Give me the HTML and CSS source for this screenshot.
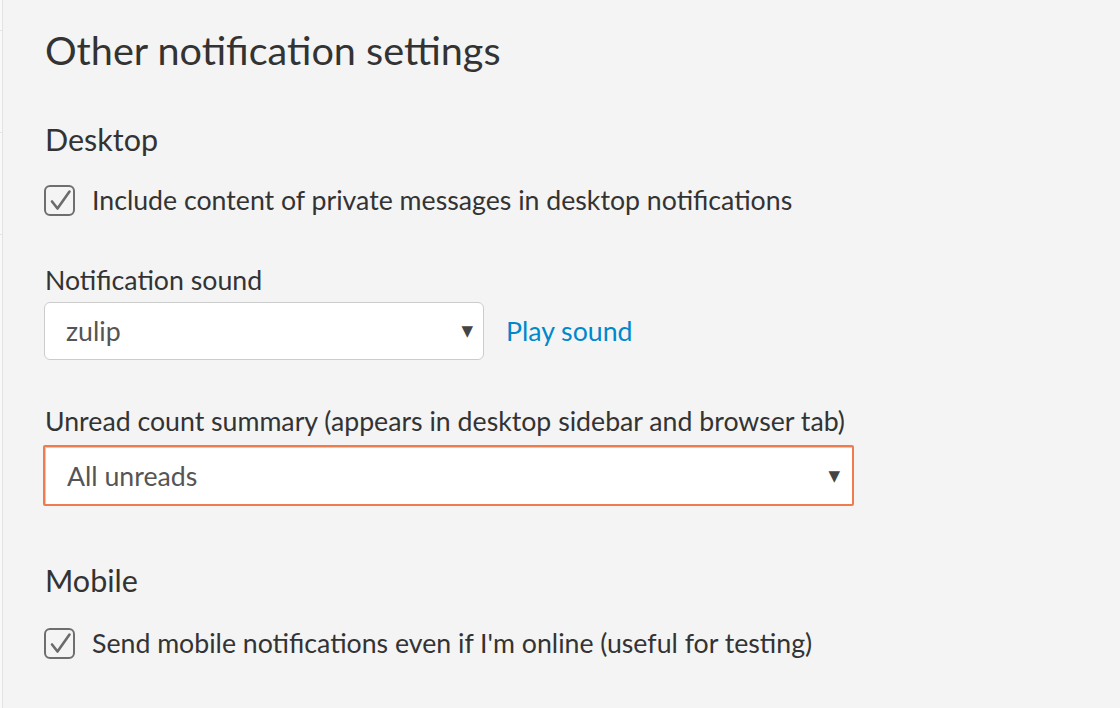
FILE: index.html
```html
<!DOCTYPE html>
<html>
<head>
<meta charset="utf-8">
<link rel="stylesheet" href="styles.css">
</head>
<body>
<div class="page">
  <div class="side-strip">
    <div class="strip-cell"></div>
    <div class="strip-cell"></div>
    <div class="strip-cell"></div>
    <div class="strip-cell"></div>
  </div>
  <main class="content">
    <h1 class="title">Other notification settings</h1>

    <h2 class="section desktop">Desktop</h2>
    <label class="check-row">
      <span class="checkbox"><svg viewBox="0 0 27 27" width="27" height="27"><path d="M6 14.5 L11.5 21.5 L23.5 4.5" fill="none" stroke="#6b6b6b" stroke-width="2.6" stroke-linecap="round" stroke-linejoin="round"/></svg></span>
      <span class="check-text">Include content of private messages in desktop notifications</span>
    </label>

    <div class="field sound-field">
      <div class="field-label">Notification sound</div>
      <div class="select-row">
        <div class="select sound-select"><span>zulip</span><span class="arrow">▼</span></div>
        <a class="link">Play sound</a>
      </div>
    </div>

    <div class="field unread-field">
      <div class="field-label">Unread count summary (appears in desktop sidebar and browser tab)</div>
      <div class="select unread-select focused"><span>All unreads</span><span class="arrow">▼</span></div>
    </div>

    <h2 class="section mobile">Mobile</h2>
    <label class="check-row mobile-check">
      <span class="checkbox"><svg viewBox="0 0 27 27" width="27" height="27"><path d="M6 14.5 L11.5 21.5 L23.5 4.5" fill="none" stroke="#6b6b6b" stroke-width="2.6" stroke-linecap="round" stroke-linejoin="round"/></svg></span>
      <span class="check-text">Send mobile notifications even if I'm online (useful for testing)</span>
    </label>
  </main>
</div>
</body>
</html>
```

FILE: styles.css
```css
html, body {
  margin: 0;
  padding: 0;
  height: 100%;
}

body {
  background: #f4f4f4;
  font-family: Lato, "Noto Sans", sans-serif;
  color: #333333;
  overflow: hidden;
}

.page {
  display: flex;
  height: 708px;
}

.side-strip {
  width: 2px;
  background: #f9f9f9;
  border-right: 1px solid #e3e3e3;
  display: flex;
  flex-direction: column;
}

.strip-cell {
  height: 101px;
  border-top: 1px solid #e6e6e6;
}

.strip-cell:first-child {
  height: 30px;
  border-top: none;
}

.content {
  padding-left: 42px;
  display: flex;
  flex-direction: column;
  align-items: flex-start;
}

.title {
  margin: 25px 0 0 0;
  font-size: 39.6px;
  font-weight: 400;
  line-height: 50px;
  color: #333;
}

.section {
  margin: 0;
  font-size: 30.5px;
  font-weight: 400;
  line-height: 40px;
  color: #333;
}

.section.desktop {
  margin-top: 44px;
}

.check-row {
  display: flex;
  align-items: center;
  gap: 17px;
  margin-top: 24px;
  margin-left: -1px;
}

.check-row.mobile-check {
  margin-top: 26px;
}

.checkbox {
  width: 27px;
  height: 27px;
  border: 2px solid #6e6e6e;
  border-radius: 6px;
  display: flex;
  align-items: center;
  justify-content: center;
  box-sizing: content-box;
  flex: none;
}

.checkbox svg {
  width: 27px;
  height: 27px;
  display: block;
}

.check-text {
  font-size: 26.7px;
  line-height: 34px;
  color: #333;
}

.field-label {
  font-size: 26.7px;
  line-height: 34px;
  color: #333;
}

.sound-field {
  margin-top: 46px;
}

.select-row {
  display: flex;
  align-items: center;
  gap: 22px;
  margin-top: 5px;
  margin-left: -1px;
}

.select {
  display: flex;
  align-items: center;
  justify-content: space-between;
  box-sizing: border-box;
  background: #fff;
  border: 1px solid #cccccc;
  border-radius: 6px;
  padding: 0 10px 0 21px;
  font-size: 26.7px;
  color: #555;
}

.sound-select {
  width: 440px;
  height: 58px;
}

.arrow {
  font-size: 15px;
  color: #444;
  font-family: "DejaVu Sans", sans-serif;
}

.link {
  color: #0088cc;
  font-size: 26.7px;
  cursor: pointer;
}

.unread-field {
  margin-top: 44px;
}

.unread-select {
  width: 811px;
  height: 61px;
  margin-top: 7px;
  margin-left: -2px;
}

.focused {
  border: 2px solid #f07b4c;
  border-radius: 2px;
  box-shadow: inset 1px 1px 0 #cfcfcf;
  padding-left: 22px;
  padding-right: 12px;
}

.section.mobile {
  margin-top: 54px;
}
```
